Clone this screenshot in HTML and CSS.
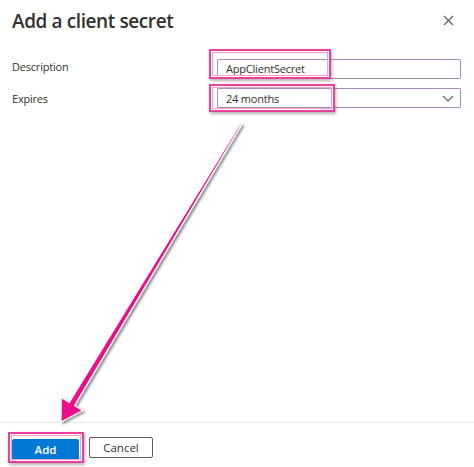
FILE: index.html
```html
<!DOCTYPE html>
<html lang="en">
<head>
    <meta charset="UTF-8">
    <title>Add a client secret</title>
    <link rel="stylesheet" href="styles.css">
</head>
<body>
    <div class="panel">
        <div class="panel-header">
            <h1>Add a client secret</h1>
            <button class="close-btn" aria-label="Close">
                <svg width="11" height="11" viewBox="0 0 11 11"><path d="M1 1 L10 10 M10 1 L1 10" stroke="#605e5c" stroke-width="1.2" fill="none"/></svg>
            </button>
        </div>

        <div class="panel-body">
            <div class="form-row">
                <label for="desc">Description</label>
                <div class="field">
                    <input type="text" id="desc" value="AppClientSecret">
                    <span class="highlight hl-desc"></span>
                </div>
            </div>
            <div class="form-row">
                <label for="expires">Expires</label>
                <div class="field">
                    <div class="select" id="expires">
                        <span>24 months</span>
                        <svg width="12" height="7" viewBox="0 0 12 7"><path d="M1 1 L6 6 L11 1" stroke="#605e5c" stroke-width="1.1" fill="none"/></svg>
                    </div>
                    <span class="highlight hl-expires"></span>
                </div>
            </div>
        </div>

        <div class="panel-footer">
            <div class="btn-wrap">
                <button class="btn btn-primary">Add</button>
                <span class="highlight hl-add"></span>
            </div>
            <button class="btn btn-default">Cancel</button>
        </div>

        <svg class="arrow" width="474" height="467" viewBox="0 0 474 467">
            <defs>
                <filter id="shadow" x="-20%" y="-20%" width="140%" height="140%">
                    <feDropShadow dx="2" dy="1.5" stdDeviation="1.2" flood-color="#000" flood-opacity="0.45"/>
                </filter>
            </defs>
            <polygon points="240.3,123.6 241.7,124.4 74.5,405.6 82.6,410.5 61,422 61.2,397.5 69.3,402.4"
                     fill="#ec0a8a" stroke="#fff" stroke-width="1.2" stroke-linejoin="round" filter="url(#shadow)"/>
        </svg>
    </div>
</body>
</html>
```

FILE: styles.css
```css
* {
    margin: 0;
    padding: 0;
    box-sizing: border-box;
}

body {
    font-family: "Open Sans", "Noto Sans", Arial, sans-serif;
    background: #fff;
    color: #323130;
}

.panel {
    position: relative;
    width: 474px;
    height: 467px;
    display: flex;
    flex-direction: column;
}

.panel-header {
    display: flex;
    justify-content: space-between;
    align-items: center;
    height: 40px;
    padding: 0 20px 0 12px;
}

.panel-header h1 {
    font-size: 19px;
    font-weight: 600;
    letter-spacing: -0.4px;
    line-height: 28px;
    margin-top: 2px;
}

.close-btn {
    border: none;
    background: none;
    width: 11px;
    height: 11px;
    display: flex;
}

.panel-body {
    flex: 1;
    display: flex;
    flex-direction: column;
    gap: 12px;
    padding: 16px 13px 0 12px;
}

.form-row {
    display: grid;
    grid-template-columns: 205px 1fr;
    align-items: center;
}

.form-row label {
    font-size: 11px;
    letter-spacing: -0.2px;
}

.field {
    position: relative;
    height: 20px;
}

.field input,
.select {
    width: 100%;
    height: 20px;
    border: 1px solid #a98cc2;
    border-radius: 1px;
    font-family: inherit;
    font-size: 11px;
    letter-spacing: -0.2px;
    color: #323130;
    padding: 0 8px;
    background: #fff;
}

.select {
    display: flex;
    align-items: center;
    justify-content: space-between;
    padding-right: 6px;
}

.highlight {
    position: absolute;
    border: 2px solid #ec3f9b;
    box-shadow: inset 0 0 0 1px #fff, inset 0 0 0 2px #f3a1cc, 1px 2px 3px rgba(0, 0, 0, 0.3);
    pointer-events: none;
}

.hl-desc {
    left: -8px;
    top: -7px;
    width: 122px;
    height: 30px;
}

.hl-expires {
    left: -8px;
    top: -4px;
    width: 126px;
    height: 28px;
}

.panel-footer {
    display: flex;
    gap: 10px;
    height: 45px;
    padding: 14px 12px 0;
    border-top: 1px solid #e6e6e6;
}

.btn-wrap {
    position: relative;
}

.btn {
    height: 21px;
    border-radius: 2px;
    font-family: inherit;
    font-size: 11.5px;
    font-weight: 600;
    cursor: pointer;
}

.btn-primary {
    width: 67px;
    background: #0078d4;
    border: 1px solid #0078d4;
    color: #fff;
}

.btn-default {
    width: 64px;
    background: #fff;
    border: 1px solid #605e5c;
    color: #323130;
    font-weight: 400;
}

.hl-add {
    left: -4px;
    top: -5px;
    width: 76px;
    height: 31px;
}

.arrow {
    position: absolute;
    left: 0;
    top: 0;
    pointer-events: none;
}
```
